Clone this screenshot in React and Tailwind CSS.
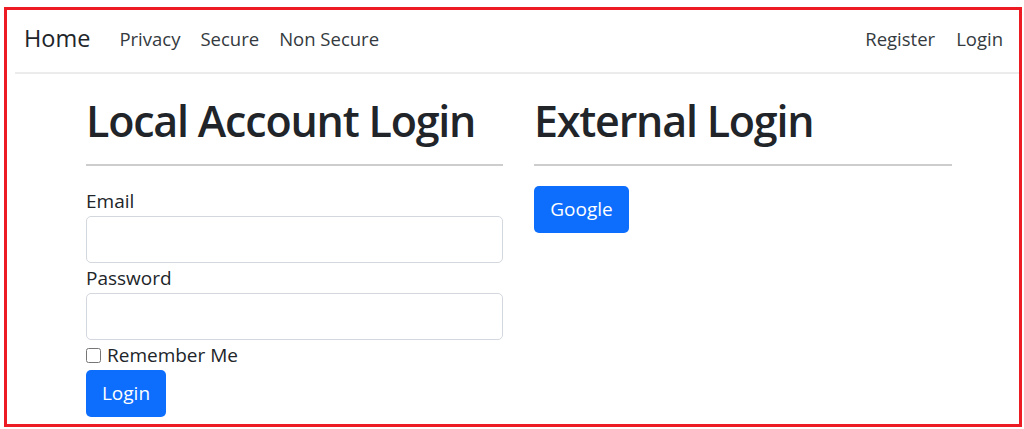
export default function App() {
  return (
    <div className="w-[1024px] h-[429px] bg-white pt-[7px] pl-[4px] font-['Open_Sans',sans-serif] text-[#212529]">
      <div className="w-[1018px] h-[420px] border-[3px] border-[#ed1c24] pl-[8px] flex flex-col overflow-hidden">
        <nav className="h-[64px] border-b-2 border-[#ececec] flex items-center pl-[9px] pr-[16px] pb-[4px] shrink-0">
          <a className="text-[23.5px] text-[#212529]">Home</a>
          <ul className="flex ml-[29px] gap-[20px] text-[18.5px] text-[#343a40]">
            <li>Privacy</li>
            <li>Secure</li>
            <li>Non Secure</li>
          </ul>
          <ul className="flex ml-auto gap-[21px] text-[18.5px] text-[#343a40]">
            <li>Register</li>
            <li>Login</li>
          </ul>
        </nav>
        <div className="ml-[71px] w-[866px] flex gap-[31px] pt-[25px]">
          <div className="w-[417px]">
            <h1 className="text-[43px] leading-none font-semibold tracking-[-1.2px]">Local Account Login</h1>
            <hr className="mt-[22px] border-t-2 border-[#cdcdcd]" />
            <div className="mt-[20px] text-[19px] leading-[30px]">Email</div>
            <input className="block w-full h-[47px] border border-[#d3d8de] rounded-[5px]" />
            <div className="text-[19px] leading-[30px]">Password</div>
            <input type="password" className="block w-full h-[47px] border border-[#d3d8de] rounded-[5px]" />
            <label className="flex items-center gap-[6px] h-[30px] text-[19px] leading-[30px]">
              <input type="checkbox" className="w-[15px] h-[15px] m-0" />
              <span>Remember Me</span>
            </label>
            <button className="h-[47px] w-[80px] bg-[#0d6efd] text-white text-[19px] rounded-[5px]">Login</button>
          </div>
          <div className="w-[418px]">
            <h1 className="text-[43px] leading-none font-semibold tracking-[-1.2px]">External Login</h1>
            <hr className="mt-[22px] border-t-2 border-[#cdcdcd]" />
            <button className="mt-[20px] h-[47px] w-[95px] bg-[#0d6efd] text-white text-[19px] rounded-[5px]">Google</button>
          </div>
        </div>
      </div>
    </div>
  );
}
